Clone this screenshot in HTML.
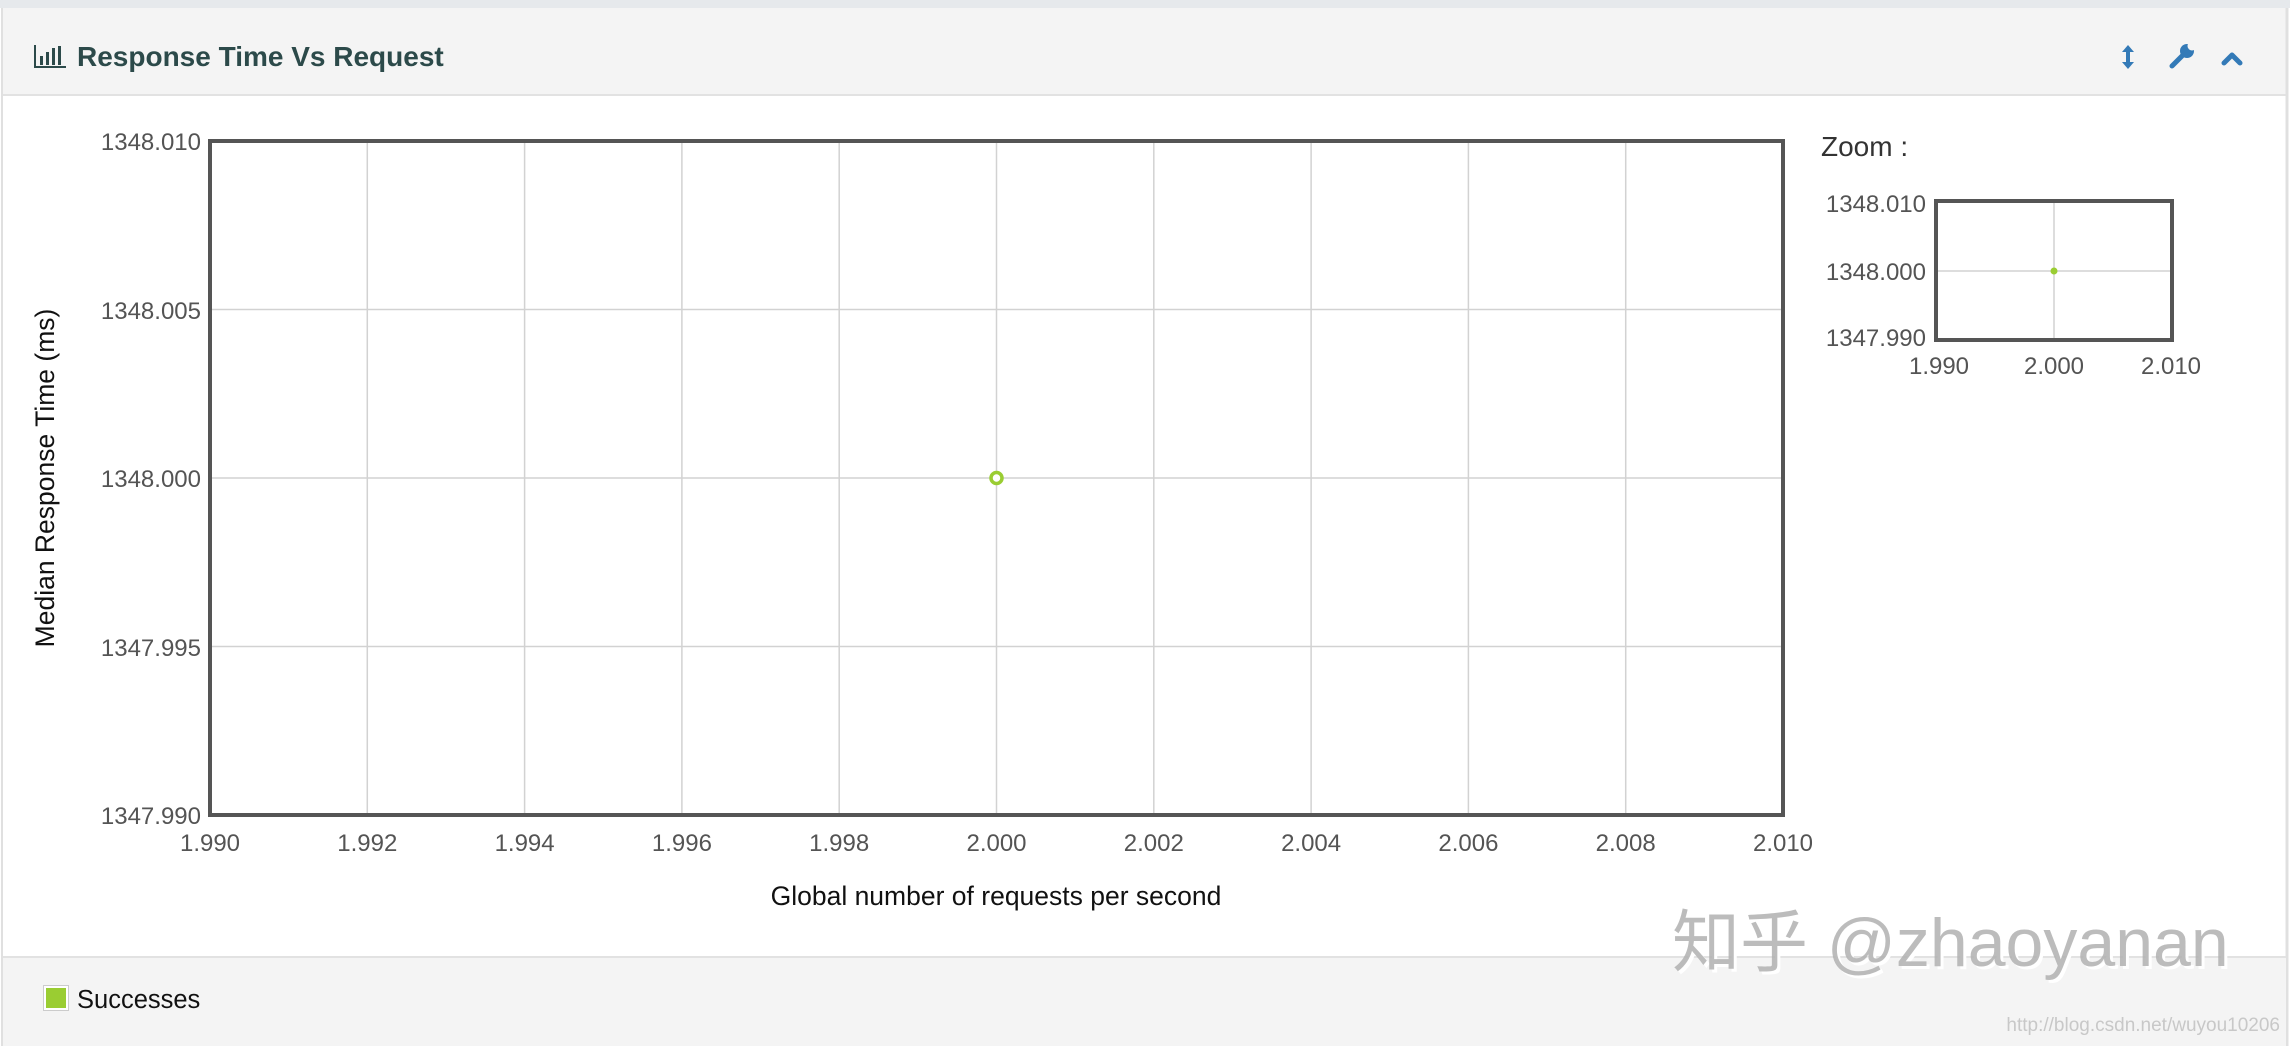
<!DOCTYPE html>
<html><head><meta charset="utf-8"><style>
html,body{margin:0;padding:0;width:2290px;height:1046px;overflow:hidden;background:#fff}
svg{display:block}
text{font-family:"Liberation Sans",Arial,sans-serif}
</style></head><body>
<svg width="2290" height="1046" viewBox="0 0 2290 1046" xmlns="http://www.w3.org/2000/svg">
<rect x="0" y="0" width="2290" height="1046" fill="#fff"/>
<rect x="0" y="0" width="2290" height="8" fill="#e6e9ec"/>
<rect x="2" y="8" width="2284" height="87" fill="#f4f4f4"/>
<line x1="2" y1="95" x2="2286" y2="95" stroke="#e2e2e2" stroke-width="2"/>
<line x1="2" y1="8" x2="2" y2="1046" stroke="#e0e0e0" stroke-width="2"/>
<line x1="2287" y1="8" x2="2287" y2="1046" stroke="#e0e0e0" stroke-width="3"/>
<g fill="#2c4a4a">
<rect x="34" y="45" width="2" height="23"/><rect x="34" y="66" width="32" height="2"/>
<rect x="40" y="56" width="3" height="9"/><rect x="46" y="52" width="3" height="13"/><rect x="52" y="48" width="3" height="17"/><rect x="58" y="46" width="3" height="19"/>
</g>
<text x="77" y="66" font-size="28" font-weight="bold" fill="#2c4a4a">Response Time Vs Request</text>
<g fill="#337ab7" stroke="#337ab7">
<path d="M2128 45 L2122 52 L2126 52 L2126 62 L2122 62 L2128 69 L2134 62 L2130 62 L2130 52 L2134 52 Z" stroke="none"/>
<path d="M2172 66 L2184 54" stroke-width="5" stroke-linecap="round" fill="none"/>
<circle cx="2187" cy="51" r="7" stroke="none"/>
<circle cx="2192" cy="46" r="4.5" fill="#f4f4f4" stroke="none"/>
<path d="M2224 63 L2232 55 L2240 63" fill="none" stroke-width="5" stroke-linecap="round" stroke-linejoin="round"/>
</g>
<g stroke="#d2d2d2" stroke-width="1.5">
<line x1="367.3" y1="141" x2="367.3" y2="815"/><line x1="524.6" y1="141" x2="524.6" y2="815"/><line x1="681.9" y1="141" x2="681.9" y2="815"/><line x1="839.2" y1="141" x2="839.2" y2="815"/><line x1="996.5" y1="141" x2="996.5" y2="815"/><line x1="1153.8" y1="141" x2="1153.8" y2="815"/><line x1="1311.1" y1="141" x2="1311.1" y2="815"/><line x1="1468.4" y1="141" x2="1468.4" y2="815"/><line x1="1625.7" y1="141" x2="1625.7" y2="815"/>
<line x1="210" y1="309.5" x2="1783" y2="309.5"/><line x1="210" y1="478" x2="1783" y2="478"/><line x1="210" y1="646.5" x2="1783" y2="646.5"/>
</g>
<rect x="210" y="141" width="1573" height="674" fill="none" stroke="#555" stroke-width="4"/>
<circle cx="996.5" cy="478" r="5.5" fill="#fff" stroke="#9acd32" stroke-width="3.5"/>
<g font-size="24" fill="#545454" text-anchor="end">
<text x="201" y="150">1348.010</text><text x="201" y="319">1348.005</text><text x="201" y="487">1348.000</text><text x="201" y="656">1347.995</text><text x="201" y="824">1347.990</text>
</g>
<g font-size="24" fill="#545454" text-anchor="middle">
<text x="210" y="851">1.990</text><text x="367.3" y="851">1.992</text><text x="524.6" y="851">1.994</text><text x="681.9" y="851">1.996</text><text x="839.2" y="851">1.998</text><text x="996.5" y="851">2.000</text><text x="1153.8" y="851">2.002</text><text x="1311.1" y="851">2.004</text><text x="1468.4" y="851">2.006</text><text x="1625.7" y="851">2.008</text><text x="1783" y="851">2.010</text>
</g>
<text x="996" y="905" font-size="26.5" fill="#111" text-anchor="middle">Global number of requests per second</text>
<text transform="translate(54,478) rotate(-90)" font-size="26.5" fill="#111" text-anchor="middle">Median Response Time (ms)</text>
<text x="1821" y="156" font-size="28" fill="#333">Zoom :</text>
<g stroke="#d2d2d2" stroke-width="1.5"><line x1="2054" y1="201" x2="2054" y2="340"/><line x1="1936" y1="271" x2="2172" y2="271"/></g>
<rect x="1936" y="201" width="236" height="139" fill="none" stroke="#555" stroke-width="4"/>
<circle cx="2054" cy="271" r="3.5" fill="#9acd32"/>
<g font-size="24" fill="#545454" text-anchor="end">
<text x="1926" y="212">1348.010</text><text x="1926" y="280">1348.000</text><text x="1926" y="346">1347.990</text>
</g>
<g font-size="24" fill="#545454" text-anchor="middle">
<text x="1939" y="374">1.990</text><text x="2054" y="374">2.000</text><text x="2171" y="374">2.010</text>
</g>
<rect x="3" y="957" width="2283" height="89" fill="#f4f4f4"/>
<line x1="3" y1="957" x2="2286" y2="957" stroke="#e2e2e2" stroke-width="2"/>
<rect x="43.5" y="985.5" width="25" height="25" fill="#fff" stroke="#ccc" stroke-width="1"/>
<rect x="46" y="988" width="20" height="20" fill="#9acd32"/>
<text x="77" y="1008" font-size="25.5" fill="#111">Successes</text>
<text x="1675" y="969" font-size="68" fill="#fff" font-family="'Liberation Sans','Noto Sans CJK SC',sans-serif">知乎 @zhaoyanan</text>
<text x="1672" y="966" font-size="68" fill="#b0b0b0" fill-opacity="0.85" font-family="'Liberation Sans','Noto Sans CJK SC',sans-serif">知乎 @zhaoyanan</text>
<text x="2280" y="1031" font-size="19" fill="#c8c8c8" text-anchor="end" font-family="'Liberation Mono',monospace">http://blog.csdn.net/wuyou10206</text>
</svg>
</body></html>
